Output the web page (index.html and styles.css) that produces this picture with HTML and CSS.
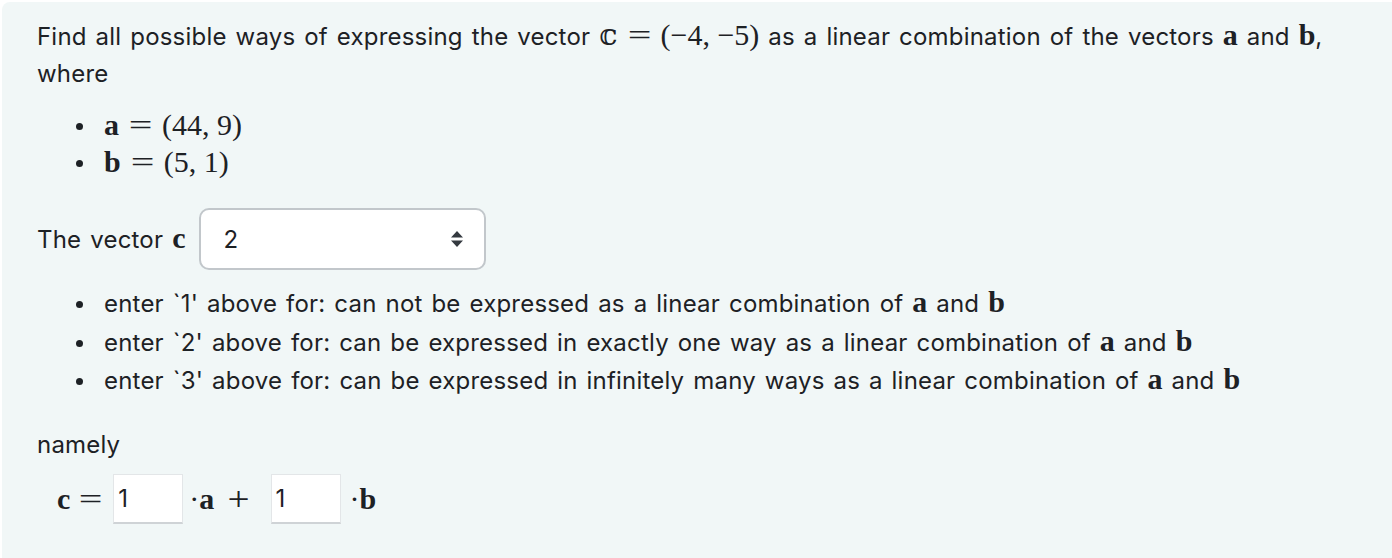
FILE: index.html
```html
<!DOCTYPE html>
<html>
<head>
<meta charset="utf-8">
<link rel="stylesheet" href="styles.css">
</head>
<body>
<div class="panel">
  <p class="intro">Find all possible ways of expressing the vector <span class="m">𝕔<span class="eq">=</span>(−4, −5)</span> as a linear combination of the vectors <span class="m"><b>a</b></span> and <span class="m"><b>b</b></span>,<br>where</p>
  <ul class="vecs">
    <li><span class="m"><b>a</b><span class="eq">=</span>(44, 9)</span></li>
    <li><span class="m"><b>b</b><span class="eq">=</span>(5, 1)</span></li>
  </ul>
  <div class="choose">
    <span>The vector <span class="m"><b>c</b></span></span>
    <div class="select">
      <span>2</span>
      <svg class="arrows" width="14" height="20" viewBox="0 0 14 20"><path d="M7 2 L13 8.5 H1 Z M7 18 L13 11.5 H1 Z" fill="#343a40"/></svg>
    </div>
  </div>
  <ul class="opts">
    <li>enter `1' above for: can not be expressed as a linear combination of <span class="m"><b>a</b></span> and <span class="m"><b>b</b></span></li>
    <li>enter `2' above for: can be expressed in exactly one way as a linear combination of <span class="m"><b>a</b></span> and <span class="m"><b>b</b></span></li>
    <li>enter `3' above for: can be expressed in infinitely many ways as a linear combination of <span class="m"><b>a</b></span> and <span class="m"><b>b</b></span></li>
  </ul>
  <p class="namely">namely</p>
  <div class="answer">
    <span class="m"><b>c</b><span class="eq eq2">=</span></span>
    <span class="box">1</span>
    <span class="m dot">·<b>a</b></span>
    <span class="m plus">+</span>
    <span class="box">1</span>
    <span class="m dot dot2">·<b>b</b></span>
  </div>
</div>
</body>
</html>
```
FILE: styles.css
```css
html, body {
  margin: 0;
  background: #ffffff;
}
body {
  font-family: Inter, "Noto Sans", sans-serif;
  font-size: 24px;
  letter-spacing: 0.2px;
  word-spacing: 2px;
  color: #1d2125;
}
.panel {
  margin: 2px 0 0 2px;
  background: #f1f7f7;
  border-top-left-radius: 8px;
  padding: 16px 35px 40px 35px;
  height: 500px;
}
.m {
  font-family: "Liberation Serif", "DejaVu Serif", serif;
  font-size: 30px;
  line-height: 0;
  letter-spacing: 0;
  word-spacing: 0;
}
.m b { font-weight: bold; }
.eq {
  display: inline-block;
  width: 23px;
  margin: 0 10px;
  text-align: center;
  transform: scaleX(1.4);
}
.intro {
  margin: 0;
  line-height: 37px;
}
.vecs {
  margin: 16px 0 0 0;
  padding-left: 67px;
  line-height: 37px;
  list-style: none;
}
.vecs li, .opts li { position: relative; }
.vecs li::before, .opts li::before {
  content: "";
  position: absolute;
  left: -28px;
  top: 15px;
  width: 7px;
  height: 7px;
  border-radius: 50%;
  background: #1d2125;
}
.opts li::before { top: 16px; }
.choose {
  display: flex;
  align-items: center;
  gap: 14px;
  margin-top: 26px;
  line-height: 37px;
}
.select {
  width: 287px;
  height: 62px;
  box-sizing: border-box;
  border: 2px solid #c2c7cb;
  border-radius: 10px;
  background: #fff;
  display: flex;
  align-items: center;
  justify-content: space-between;
  padding: 0 20px 0 22px;
}
.opts {
  margin: 15px 0 0 0;
  padding-left: 67px;
  line-height: 38.5px;
  list-style: none;
}
.namely {
  margin: 25px 0 0 0;
  line-height: 37px;
}
.answer {
  display: flex;
  align-items: center;
  margin-top: 11px;
  padding-left: 20px;
}
.answer .m { line-height: 1; }
.answer .eq2 { margin: 0 11px 0 9px; }
.box {
  width: 70px;
  height: 50px;
  box-sizing: border-box;
  background: #fff;
  border: 1px solid #e3e6e8;
  border-bottom: 2px solid #cfd3d6;
  display: flex;
  align-items: center;
  padding-left: 4px;
  font-size: 24px;
}
.dot { margin: 0 0 0 6px; }
.plus {
  display: inline-block;
  font-size: 34px;
  margin: 0 22px 0 15px;
  transform: scaleX(1.15);
}
.dot2 { margin-left: 9px; }
```
